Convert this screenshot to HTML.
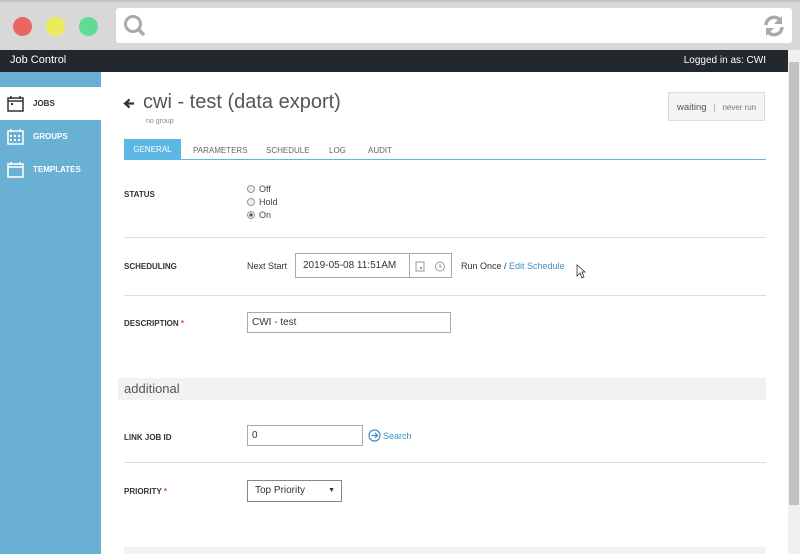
<!DOCTYPE html>
<html><head><style>
*{box-sizing:border-box;margin:0;padding:0}
body{width:800px;height:554px;overflow:hidden;font-family:"Liberation Sans",sans-serif;background:#fff;position:relative;color:#333}
.a{position:absolute}
.lbl{font-size:8px;font-weight:bold;color:#333;left:124px}
.sep{left:124px;width:642px;height:1px;background:#ddd}
.req{color:#e04040}
.inp{border:1px solid #aaa;background:#fff;font-size:10px;padding-left:7px;display:block;white-space:nowrap}
.rad{width:8px;height:8px;border-radius:50%;border:1px solid #999;background:#eee;display:inline-block;margin-right:4px;vertical-align:-1px}
</style></head><body>
<div class="a" style="left:0;top:0;width:800px;height:50px;background:#d8d8d8;border-top:2px solid #c4c4c4"></div>
<div class="a" style="left:13px;top:17px;width:19px;height:19px;border-radius:50%;background:#ec6565"></div>
<div class="a" style="left:46px;top:17px;width:19px;height:19px;border-radius:50%;background:#ecec5a"></div>
<div class="a" style="left:79px;top:17px;width:19px;height:19px;border-radius:50%;background:#5fdc94"></div>
<div class="a" style="left:116px;top:8px;width:676px;height:35px;background:#fff;border-radius:3px"></div>
<svg class="a" style="left:122px;top:13px" width="26" height="26"><circle cx="11" cy="11" r="7.5" fill="none" stroke="#aaa" stroke-width="3"/><line x1="16" y1="16" x2="22" y2="22" stroke="#aaa" stroke-width="3.5"/></svg>
<svg class="a" style="left:762px;top:14px" width="24" height="24"><path d="M4 11 A8 8 0 0 1 18 6" fill="none" stroke="#aaa" stroke-width="3.5"/><path d="M20 2 L20 10 L12 10Z" fill="#aaa"/><path d="M20 13 A8 8 0 0 1 6 18" fill="none" stroke="#aaa" stroke-width="3.5"/><path d="M4 22 L4 14 L12 14Z" fill="#aaa"/></svg>
<div class="a" style="left:0;top:50px;width:788px;height:22px;background:#23272e;color:#fff;font-size:11px">
<span class="a" style="left:10px;top:4px">Job Control</span>
<span class="a" style="right:22px;top:5px;font-size:10px">Logged in as: CWI</span></div>
<div class="a" style="left:788px;top:50px;width:12px;height:504px;background:#f0f0f0"></div>
<div class="a" style="left:789px;top:62px;width:10px;height:443px;background:#c2c2c2"></div>
<div class="a" style="left:0;top:72px;width:101px;height:482px;background:#69b0d4"></div>
<div class="a" style="left:0;top:87px;width:101px;height:33px;background:#fff"></div>
<svg class="a" style="left:7px;top:95px" width="17" height="17"><rect x="1" y="3" width="15" height="13" fill="none" stroke="#333" stroke-width="1.5"/><line x1="1" y1="6" x2="16" y2="6" stroke="#333" stroke-width="1.5"/><rect x="4" y="8" width="2" height="2" fill="#333"/><line x1="4" y1="1" x2="4" y2="4" stroke="#333" stroke-width="1.5"/><line x1="13" y1="1" x2="13" y2="4" stroke="#333" stroke-width="1.5"/></svg>
<div class="a" style="left:33px;top:99px;font-size:8px;font-weight:bold;color:#333">JOBS</div>
<svg class="a" style="left:7px;top:128px" width="17" height="17"><rect x="1" y="3" width="15" height="13" fill="none" stroke="#fff" stroke-width="1.5"/><g fill="#fff"><rect x="3" y="7" width="2" height="2"/><rect x="7" y="7" width="2" height="2"/><rect x="11" y="7" width="2" height="2"/><rect x="3" y="11" width="2" height="2"/><rect x="7" y="11" width="2" height="2"/><rect x="11" y="11" width="2" height="2"/></g><line x1="4" y1="1" x2="4" y2="4" stroke="#fff" stroke-width="1.5"/><line x1="13" y1="1" x2="13" y2="4" stroke="#fff" stroke-width="1.5"/></svg>
<div class="a" style="left:33px;top:132px;font-size:8px;font-weight:bold;color:#fff">GROUPS</div>
<svg class="a" style="left:7px;top:161px" width="17" height="17"><rect x="1" y="3" width="15" height="13" fill="none" stroke="#fff" stroke-width="1.5"/><line x1="1" y1="6" x2="16" y2="6" stroke="#fff" stroke-width="1.5"/><line x1="4" y1="1" x2="4" y2="4" stroke="#fff" stroke-width="1.5"/><line x1="13" y1="1" x2="13" y2="4" stroke="#fff" stroke-width="1.5"/></svg>
<div class="a" style="left:33px;top:165px;font-size:8px;font-weight:bold;color:#fff">TEMPLATES</div>

<svg class="a" style="left:123px;top:98px" width="12" height="11"><path d="M11 5.5H3M6.5 1.5L2 5.5l4.5 4" fill="none" stroke="#333" stroke-width="2.2"/></svg>
<div class="a" style="left:143px;top:91px;font-size:20px;color:#555">cwi - test (data export)</div>
<div class="a" style="left:146px;top:118px;font-size:7px;color:#888">no group</div>
<div class="a" style="left:668px;top:92px;width:97px;height:29px;background:#f4f4f4;border:1px solid #ddd;font-size:9.5px;color:#555;padding:9px 0 0 8px">waiting <span style="color:#aaa;margin:0 4px">|</span> <span style="font-size:8px;color:#777">never run</span></div>
<div class="a" style="left:124px;top:139px;width:57px;height:20px;background:#5bb8e4;color:#fff;font-size:8px;text-align:center;line-height:21px">GENERAL</div>
<div class="a" style="left:193px;top:146px;font-size:8px;color:#666">PARAMETERS</div>
<div class="a" style="left:266px;top:146px;font-size:8px;color:#666">SCHEDULE</div>
<div class="a" style="left:329px;top:146px;font-size:8px;color:#666">LOG</div>
<div class="a" style="left:368px;top:146px;font-size:8px;color:#666">AUDIT</div>
<div class="a" style="left:124px;top:159px;width:642px;height:1px;background:#5bb8e4"></div>

<div class="a lbl" style="top:190px">STATUS</div>
<div class="a" style="left:247px;top:183px;font-size:9px;color:#444;line-height:13px"><div><span class="rad"></span>Off</div><div><span class="rad"></span>Hold</div><div><span class="rad" style="background:radial-gradient(#555 35%,#eee 45%)"></span>On</div></div>
<div class="a sep" style="top:237px"></div>
<div class="a lbl" style="top:262px">SCHEDULING</div>
<div class="a" style="left:247px;top:261px;font-size:9px;color:#333">Next Start</div>
<div class="a inp" style="left:295px;top:253px;width:157px;height:25px;line-height:23px;padding-left:7px">2019-05-08 11:51AM</div>
<div class="a" style="left:409px;top:254px;width:1px;height:23px;background:#aaa"></div>
<svg class="a" style="left:415px;top:260px" width="30" height="12"><rect x="1" y="2" width="8" height="9" fill="none" stroke="#999"/><rect x="5" y="7" width="2" height="2" fill="#999"/><circle cx="25" cy="6.5" r="4.5" fill="none" stroke="#999"/><path d="M25 4v3h2" fill="none" stroke="#999"/></svg>
<div class="a" style="left:461px;top:261px;font-size:9px;color:#333">Run Once / <span style="color:#3a8fc8">Edit Schedule</span></div>
<svg class="a" style="left:576px;top:264px" width="10" height="15"><path d="M1 1 L1 12 L4 9 L6 14 L8 13 L6 8 L9 8Z" fill="#fff" stroke="#333" stroke-width="0.8"/></svg>
<div class="a sep" style="top:295px"></div>
<div class="a lbl" style="top:319px">DESCRIPTION <span class="req">*</span></div>
<div class="a inp" style="left:247px;top:312px;width:204px;height:21px;line-height:19px;padding-left:4px">CWI - test</div>
<div class="a" style="left:118px;top:378px;width:648px;height:22px;background:#f2f2f2;font-size:13px;color:#555;padding:3px 0 0 6px">additional</div>
<div class="a lbl" style="top:433px">LINK JOB ID</div>
<div class="a inp" style="left:247px;top:425px;width:116px;height:21px;line-height:19px;padding-left:4px">0</div>
<svg class="a" style="left:368px;top:429px" width="13" height="13"><circle cx="6.5" cy="6.5" r="5.5" fill="none" stroke="#3a8fc8" stroke-width="1.2"/><path d="M3.5 6.5h6M7 4l2.5 2.5L7 9" fill="none" stroke="#3a8fc8" stroke-width="1.2"/></svg>
<div class="a" style="left:383px;top:431px;font-size:9px;color:#3a8fc8">Search</div>
<div class="a sep" style="top:462px"></div>
<div class="a lbl" style="top:487px">PRIORITY <span class="req">*</span></div>
<div class="a inp" style="left:247px;top:480px;width:95px;height:22px;line-height:20px;border-color:#888">Top Priority<span style="position:absolute;right:6px;top:0;font-size:7px">▼</span></div>
<div class="a" style="left:124px;top:547px;width:642px;height:7px;background:#f2f2f2"></div>
</body></html>
